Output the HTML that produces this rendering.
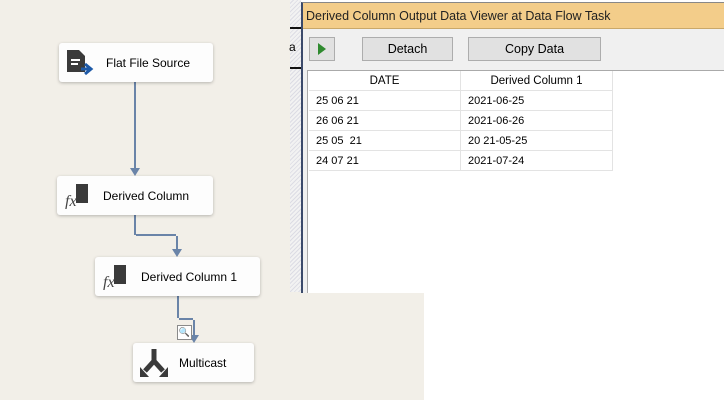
<!DOCTYPE html>
<html><head><style>
body{margin:0;width:724px;height:400px;position:relative;overflow:hidden;background:#fff;font-family:"Liberation Sans",sans-serif;font-size:12px;color:#000}
.canvas{position:absolute;left:0;top:0;width:300px;height:400px;background:#f2efe8}
.canvas2{position:absolute;left:300px;top:292px;width:124px;height:108px;background:#f2efe8}
.node{position:absolute;background:#fdfdfd;border-radius:3px;box-shadow:0 1px 3px rgba(0,0,0,.25);height:39px}
.node span{position:absolute;top:13px;font-size:12px}
.line{position:absolute;background:#6a84a8}
.win{position:absolute;left:301px;top:2px;width:423px;height:290px;background:#f0f0f0;border-left:2px solid #3b4a6b;border-top:1px solid #888}
.title{position:absolute;left:0;top:0;right:0;height:25px;background:#f3cd8a;border-bottom:1px solid #c9a86a}
.title span{position:absolute;left:3px;top:6px;font-size:12.5px;color:#222}
.btn{position:absolute;top:34px;height:24px;background:#e1e1e1;border:1px solid #adadad;box-sizing:border-box;text-align:center;line-height:22px;font-size:12.5px}
.grid{position:absolute;left:4px;top:67px;right:0;bottom:0;background:#fff;border-top:1px solid #aaa;border-left:1px solid #aaa}
.cell{position:absolute;height:20px;line-height:20px;border-right:1px solid #e3e3e3;border-bottom:1px solid #e3e3e3;box-sizing:border-box;font-size:11px}
</style></head><body>
<div class="canvas"></div><div class="canvas2"></div>
<div style="position:absolute;left:290px;top:0;width:11px;height:292px;background:repeating-linear-gradient(135deg,#f2f2f2 0 2px,#dcdce4 2px 3px)"></div>
<div style="position:absolute;left:290px;top:27px;width:11px;height:2px;background:#111"></div>
<div style="position:absolute;left:290px;top:67px;width:11px;height:2px;background:#111"></div>
<div style="position:absolute;left:289px;top:40px;font-size:12px">a</div>

<div class="line" style="left:134px;top:82px;width:2px;height:90px"></div>
<div style="position:absolute;left:130px;top:168px;border-left:5px solid transparent;border-right:5px solid transparent;border-top:8px solid #6a84a8"></div>
<div class="line" style="left:134px;top:215px;width:2px;height:20px"></div>
<div class="line" style="left:136px;top:234px;width:40px;height:2px"></div>
<div class="line" style="left:176px;top:236px;width:2px;height:14px"></div>
<div style="position:absolute;left:172px;top:249px;border-left:5px solid transparent;border-right:5px solid transparent;border-top:8px solid #6a84a8"></div>
<div class="line" style="left:177px;top:296px;width:2px;height:22px"></div>
<div class="line" style="left:179px;top:318px;width:14px;height:2px"></div>
<div class="line" style="left:193px;top:320px;width:2px;height:16px"></div>
<div style="position:absolute;left:189px;top:335px;border-left:5px solid transparent;border-right:5px solid transparent;border-top:8px solid #6a84a8"></div>
<div style="position:absolute;left:177px;top:325px;width:13px;height:13px;background:#fff;border:1px solid #8a8a8a;font-size:9px;line-height:13px;text-align:center">🔍</div>

<div class="node" style="left:59px;top:43px;width:154px">
<svg style="position:absolute;left:6px;top:6px" width="30" height="28"><path d="M2 1h12l6 6v16H2z" fill="#3a3a3a"/><rect x="6" y="10" width="9" height="2" fill="#fff"/><rect x="6" y="14" width="7" height="2" fill="#fff"/><path d="M16 20h8M20 15l6 5-6 5" stroke="#1e5aa8" stroke-width="3" fill="none"/></svg>
<span style="left:47px">Flat File Source</span></div>
<div class="node" style="left:57px;top:176px;width:156px">
<svg style="position:absolute;left:6px;top:7px" width="30" height="26"><rect x="13" y="1" width="12" height="19" fill="#3a3a3a"/><text x="2" y="23" font-family="Liberation Serif" font-style="italic" font-size="16" fill="#444">fx</text></svg>
<span style="left:46px">Derived Column</span></div>
<div class="node" style="left:95px;top:257px;width:165px">
<svg style="position:absolute;left:6px;top:7px" width="30" height="26"><rect x="13" y="1" width="12" height="19" fill="#3a3a3a"/><text x="2" y="23" font-family="Liberation Serif" font-style="italic" font-size="16" fill="#444">fx</text></svg>
<span style="left:46px">Derived Column 1</span></div>
<div class="node" style="left:133px;top:343px;width:121px">
<svg style="position:absolute;left:5px;top:4px" width="32" height="32"><path d="M16 2v12L7 24M16 14l9 10" stroke="#3a3a3a" stroke-width="5" fill="none"/><path d="M2 20v10h9z M30 20v10h-9z" fill="#3a3a3a"/></svg>
<span style="left:46px">Multicast</span></div>

<div class="win">
<div class="title"><span>Derived Column Output Data Viewer at Data Flow Task</span></div>
<div class="btn" style="left:6px;width:26px"><svg width="10" height="14" style="margin-top:4px"><path d="M1 1l8 6-8 6z" fill="#2f8a2f"/></svg></div>
<div class="btn" style="left:59px;width:91px">Detach</div>
<div class="btn" style="left:165px;width:133px">Copy Data</div>
<div class="grid">
<div class="cell" style="left:1px;top:0;width:152px;text-align:center;font-size:11.5px">DATE</div>
<div class="cell" style="left:153px;top:0;width:152px;text-align:center;font-size:11.5px">Derived Column 1</div>
<div class="cell" style="left:1px;top:20px;width:152px;padding-left:7px">25 06 21</div>
<div class="cell" style="left:153px;top:20px;width:152px;padding-left:7px">2021-06-25</div>
<div class="cell" style="left:1px;top:40px;width:152px;padding-left:7px">26 06 21</div>
<div class="cell" style="left:153px;top:40px;width:152px;padding-left:7px">2021-06-26</div>
<div class="cell" style="left:1px;top:60px;width:152px;padding-left:7px;white-space:pre">25 05  21</div>
<div class="cell" style="left:153px;top:60px;width:152px;padding-left:7px">20 21-05-25</div>
<div class="cell" style="left:1px;top:80px;width:152px;padding-left:7px">24 07 21</div>
<div class="cell" style="left:153px;top:80px;width:152px;padding-left:7px">2021-07-24</div>
</div>
</div>
</body></html>
